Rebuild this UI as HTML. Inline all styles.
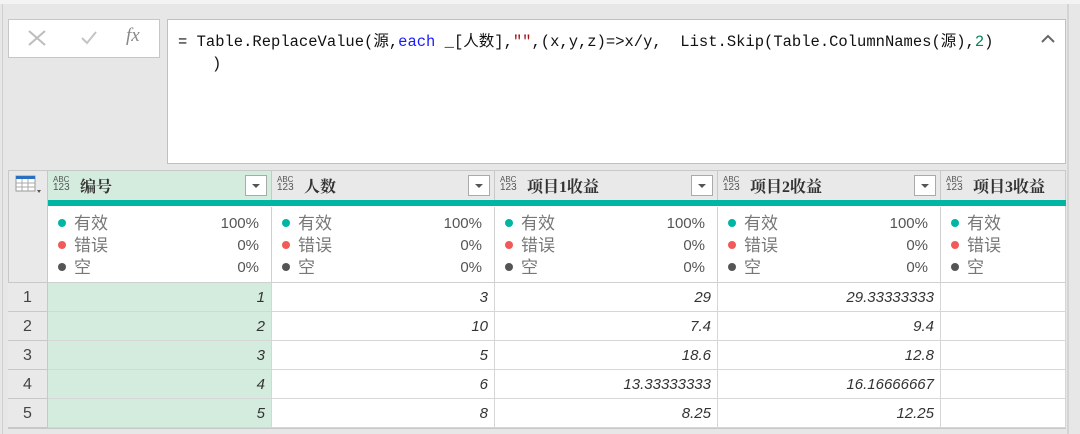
<!DOCTYPE html>
<html><head><meta charset="utf-8"><style>
*{margin:0;padding:0;box-sizing:border-box}
body{width:1080px;height:434px;background:#e7e7e7;position:relative;overflow:hidden;font-family:"Liberation Sans","Noto Sans CJK SC",sans-serif}
.abs{position:absolute}
.mono{font-family:"Liberation Mono","Noto Sans CJK SC",monospace;font-size:15.5px;color:#111;white-space:pre}
.hdr{position:absolute;top:170px;height:31px;background:#e9e9e9;border-right:1px solid #c8c8c8;border-bottom:1px solid #c8c8c8}
.hdr .t{position:absolute;left:32px;top:3px;font-family:"Liberation Serif","Noto Serif CJK SC",serif;font-weight:bold;font-size:16px;color:#333}
.abc{position:absolute;left:5px;top:5px;font-size:8px;line-height:8px;color:#555;font-family:"Liberation Sans",sans-serif}
.abc b{font-weight:normal;font-size:10px;display:block}
.dd{position:absolute;right:4px;top:4px;width:22px;height:21px;background:#fff;border:1px solid #aaa}
.dd:after{content:"";position:absolute;left:6px;top:8px;border-left:4px solid transparent;border-right:4px solid transparent;border-top:4px solid #555}
.stat{position:absolute;top:207px;height:76px;background:#fff;border-right:1px solid #d0d0d0;font-size:17px;color:#777}
.stat div{position:absolute;left:10px;height:22px;line-height:22px;width:calc(100% - 22px)}
.stat i{display:inline-block;width:8px;height:8px;border-radius:50%;margin-right:8px;vertical-align:2px}
.stat span{position:absolute;right:0;color:#555;font-size:15px}
.cell{position:absolute;height:29px;border-right:1px solid #d6d6d6;border-bottom:1px solid #d6d6d6;background:#fff;text-align:right;padding-right:6px;line-height:29px;font-style:italic;font-size:15px;color:#333}
.rn{position:absolute;left:8px;width:40px;height:29px;border-right:1px solid #c8c8c8;border-bottom:1px solid #c8c8c8;text-align:center;line-height:29px;font-size:16px;color:#444;background:#e9e9e9}
</style></head><body>
<div class="abs" style="left:0;top:0;width:1080px;height:4px;background:#f3f3f4"></div>
<div class="abs" style="left:2px;top:4px;width:1px;height:430px;background:#cfcfcf"></div>
<div class="abs" style="left:1067px;top:4px;width:2px;height:430px;background:#d4d4d4"></div>
<div class="abs" style="left:8px;top:19px;width:152px;height:39px;background:#fff;border:1px solid #c6c6c6"></div>
<svg class="abs" style="left:27px;top:29px" width="20" height="18"><path d="M2 2L18 16M18 2L2 16" stroke="#bdbdbd" stroke-width="2"/></svg>
<svg class="abs" style="left:80px;top:30px" width="18" height="16"><path d="M2 8L7 13L16 2" stroke="#c4c4c4" stroke-width="2" fill="none"/></svg>
<div class="abs" style="left:126px;top:25px;font-family:'Liberation Serif',serif;font-style:italic;font-size:19px;color:#888">fx</div>
<div class="abs" style="left:167px;top:19px;width:899px;height:145px;background:#fff;border:1px solid #c0c0c0"></div>
<div class="abs mono" style="left:178px;top:29px">= Table.ReplaceValue(源,<span style="color:#1a1aff">each</span> _[人数],<span style="color:#a31515">""</span>,(x,y,z)=&gt;x/y,  List.Skip(Table.ColumnNames(源),<span style="color:#098658">2</span>)</div>
<div class="abs mono" style="left:212px;top:55px">)</div>
<svg class="abs" style="left:1040px;top:33px" width="16" height="12"><path d="M2 9L8 3L14 9" stroke="#666" stroke-width="2" fill="none"/></svg>
<div class="abs" style="left:8px;top:170px;width:1058px;height:259px;background:#fff;border:1px solid #c8c8c8"></div>
<div class="hdr" style="left:8px;width:40px;border-left:1px solid #c8c8c8;border-top:1px solid #c8c8c8"></div>
<svg class="abs" style="left:15px;top:175px" width="28" height="20"><rect x="1" y="1" width="19" height="15" fill="#fff" stroke="#999"/><rect x="1" y="1" width="19" height="3" fill="#2b6fc0"/><path d="M1 8H20M1 12H20M7 4V16M13 4V16" stroke="#aaa"/><path d="M22 15L26 15L24 18Z" fill="#555"/></svg>
<div class="hdr" style="left:48px;width:224px;background:#d4ecdd;border-top:1px solid #c8c8c8"><div class="abc">ABC<b>123</b></div><div class="t">编号</div><div class="dd"></div></div>
<div class="hdr" style="left:272px;width:223px;border-top:1px solid #c8c8c8"><div class="abc">ABC<b>123</b></div><div class="t">人数</div><div class="dd"></div></div>
<div class="hdr" style="left:495px;width:223px;border-top:1px solid #c8c8c8"><div class="abc">ABC<b>123</b></div><div class="t">项目1收益</div><div class="dd"></div></div>
<div class="hdr" style="left:718px;width:223px;border-top:1px solid #c8c8c8"><div class="abc">ABC<b>123</b></div><div class="t">项目2收益</div><div class="dd"></div></div>
<div class="hdr" style="left:941px;width:125px;border-top:1px solid #c8c8c8"><div class="abc">ABC<b>123</b></div><div class="t">项目3收益</div></div>
<div class="abs" style="left:48px;top:200px;width:1018px;height:6px;background:#00b5a2"></div>
<div class="abs" style="left:8px;top:200px;width:40px;height:83px;background:#e9e9e9;border:1px solid #c8c8c8;border-top:none"></div>

<div class="stat" style="left:48px;width:224px"><div style="top:6px"><i style="background:#00b5a2"></i>有效<span>100%</span></div><div style="top:28px"><i style="background:#f25a5a"></i>错误<span>0%</span></div><div style="top:50px"><i style="background:#555"></i>空<span>0%</span></div></div>
<div class="stat" style="left:272px;width:223px"><div style="top:6px"><i style="background:#00b5a2"></i>有效<span>100%</span></div><div style="top:28px"><i style="background:#f25a5a"></i>错误<span>0%</span></div><div style="top:50px"><i style="background:#555"></i>空<span>0%</span></div></div>
<div class="stat" style="left:495px;width:223px"><div style="top:6px"><i style="background:#00b5a2"></i>有效<span>100%</span></div><div style="top:28px"><i style="background:#f25a5a"></i>错误<span>0%</span></div><div style="top:50px"><i style="background:#555"></i>空<span>0%</span></div></div>
<div class="stat" style="left:718px;width:223px"><div style="top:6px"><i style="background:#00b5a2"></i>有效<span>100%</span></div><div style="top:28px"><i style="background:#f25a5a"></i>错误<span>0%</span></div><div style="top:50px"><i style="background:#555"></i>空<span>0%</span></div></div>
<div class="stat" style="left:941px;width:125px"><div style="top:6px"><i style="background:#00b5a2"></i>有效</div><div style="top:28px"><i style="background:#f25a5a"></i>错误</div><div style="top:50px"><i style="background:#555"></i>空</div></div>
<div class="abs" style="left:48px;top:282px;width:1018px;height:2px;background:#d0d0d0"></div>

<div class="rn" style="top:283px">1</div><div class="rn" style="top:312px">2</div><div class="rn" style="top:341px">3</div><div class="rn" style="top:370px">4</div><div class="rn" style="top:399px">5</div>

<div class="cell" style="left:48px;top:283px;width:224px;background:#d4ecdd">1</div>
<div class="cell" style="left:48px;top:312px;width:224px;background:#d4ecdd">2</div>
<div class="cell" style="left:48px;top:341px;width:224px;background:#d4ecdd">3</div>
<div class="cell" style="left:48px;top:370px;width:224px;background:#d4ecdd">4</div>
<div class="cell" style="left:48px;top:399px;width:224px;background:#d4ecdd">5</div>

<div class="cell" style="left:272px;top:283px;width:223px">3</div>
<div class="cell" style="left:272px;top:312px;width:223px">10</div>
<div class="cell" style="left:272px;top:341px;width:223px">5</div>
<div class="cell" style="left:272px;top:370px;width:223px">6</div>
<div class="cell" style="left:272px;top:399px;width:223px">8</div>

<div class="cell" style="left:495px;top:283px;width:223px">29</div>
<div class="cell" style="left:495px;top:312px;width:223px">7.4</div>
<div class="cell" style="left:495px;top:341px;width:223px">18.6</div>
<div class="cell" style="left:495px;top:370px;width:223px">13.33333333</div>
<div class="cell" style="left:495px;top:399px;width:223px">8.25</div>

<div class="cell" style="left:718px;top:283px;width:223px">29.33333333</div>
<div class="cell" style="left:718px;top:312px;width:223px">9.4</div>
<div class="cell" style="left:718px;top:341px;width:223px">12.8</div>
<div class="cell" style="left:718px;top:370px;width:223px">16.16666667</div>
<div class="cell" style="left:718px;top:399px;width:223px">12.25</div>

<div class="cell" style="left:941px;top:283px;width:125px"></div>
<div class="cell" style="left:941px;top:312px;width:125px"></div>
<div class="cell" style="left:941px;top:341px;width:125px"></div>
<div class="cell" style="left:941px;top:370px;width:125px"></div>
<div class="cell" style="left:941px;top:399px;width:125px"></div>
</body></html>
